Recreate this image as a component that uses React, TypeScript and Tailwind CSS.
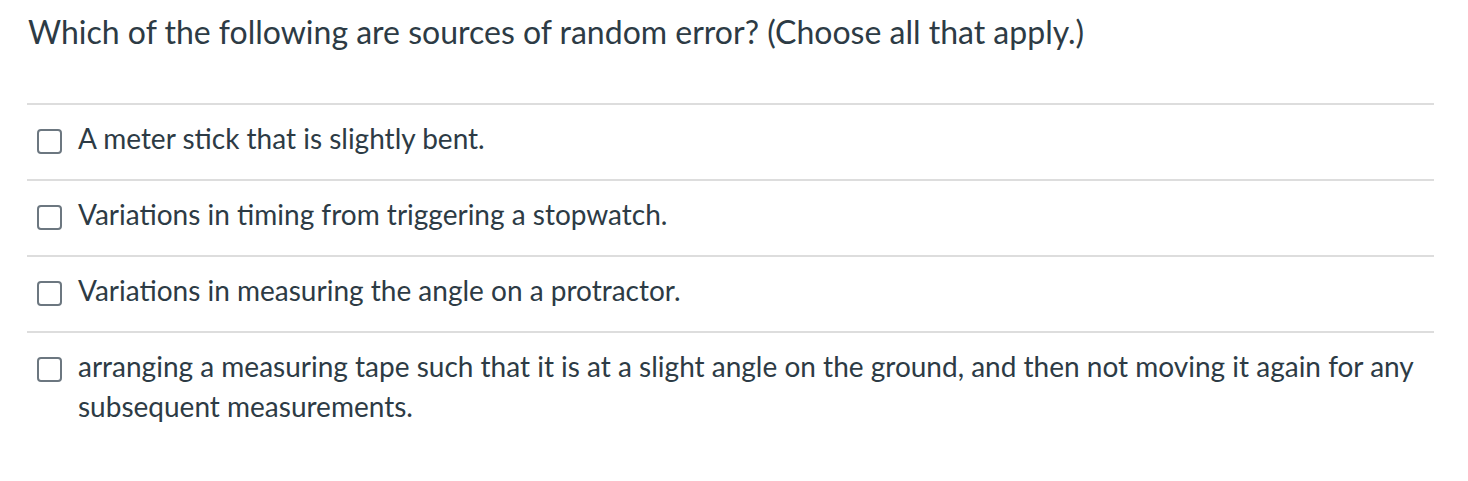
export default function App() {
  const options = [
    "A meter stick that is slightly bent.",
    "Variations in timing from triggering a stopwatch.",
    "Variations in measuring the angle on a protractor.",
    "arranging a measuring tape such that it is at a slight angle on the ground, and then not moving it again for any subsequent measurements.",
  ];
  return (
    <div
      className="w-[1468px] h-[481px] bg-white text-[#2d3b45]"
      style={{ fontFamily: "Lato, 'Noto Sans', sans-serif" }}
    >
      <div className="pl-[27px] w-[1434px]">
        <div className="pt-[10px] pl-[1px] text-[32px] leading-[44px] h-[103px]">
          Which of the following are sources of random error? (Choose all that apply.)
        </div>
        {options.map((o, i) => (
          <div key={i} className="border-t-2 border-[#dddddd] flex items-start pt-[23px] pb-[13px] min-h-[76px]">
            <div className="ml-[10px] mt-[1px] w-[25px] h-[25px] shrink-0 rounded-[4px] border-2 border-[#6c7780]" />
            <div className="ml-[16px] text-[28px] leading-[40px] -mt-[10px] pr-[10px]">{o}</div>
          </div>
        ))}
      </div>
    </div>
  );
}
